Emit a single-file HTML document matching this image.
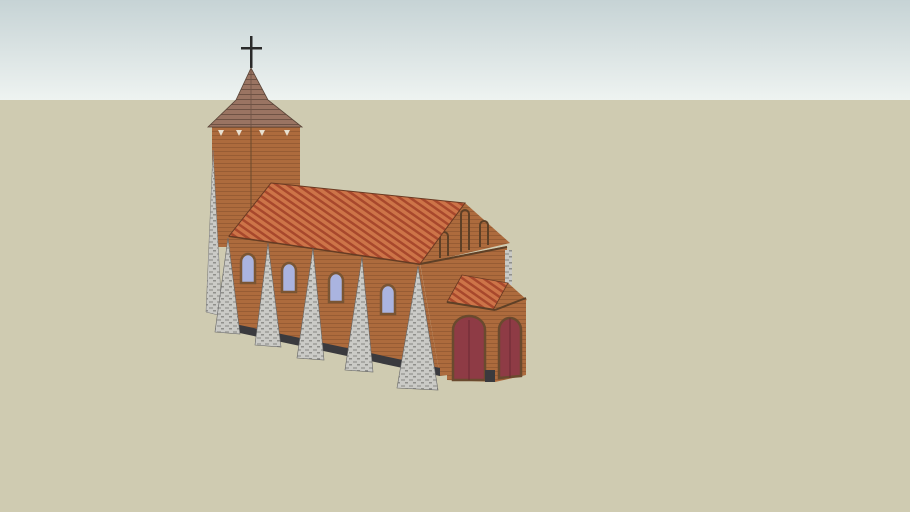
<!DOCTYPE html>
<html><head><meta charset="utf-8"><style>
html,body{margin:0;padding:0;width:910px;height:512px;overflow:hidden;background:#cfcbb1}
svg{display:block}
</style></head><body>
<svg width="910" height="512" viewBox="0 0 910 512" xmlns="http://www.w3.org/2000/svg">
<defs>
<linearGradient id="sky" x1="0" y1="0" x2="0" y2="1">
<stop offset="0" stop-color="#c6d3d5"/><stop offset="1" stop-color="#eef3f1"/></linearGradient>
<pattern id="roof" width="6" height="6" patternUnits="userSpaceOnUse" patternTransform="rotate(-55)">
<rect width="6" height="6" fill="#cd7448"/><rect width="2.5" height="6" fill="#a8482c"/></pattern>
<pattern id="troof" width="8" height="5" patternUnits="userSpaceOnUse">
<rect width="8" height="5" fill="#9a7462"/><rect y="4" width="8" height="1" fill="#6e5244"/></pattern>
<pattern id="brick" width="6" height="4" patternUnits="userSpaceOnUse">
<rect width="6" height="4" fill="#ad6b3d"/><rect y="3.3" width="6" height="0.7" fill="#8e5631"/></pattern>
<pattern id="stone" width="8" height="6" patternUnits="userSpaceOnUse">
<rect width="8" height="6" fill="#cacac6"/><rect x="1" y="1" width="4" height="2" fill="#a8a8a4"/><rect x="5" y="4" width="3" height="1.5" fill="#8f8f8b"/></pattern>
</defs>
<rect x="0" y="0" width="910" height="100" fill="url(#sky)"/>
<rect x="0" y="100" width="910" height="412" fill="#cfcbb1"/>
<rect x="250" y="36" width="2.5" height="32" fill="#2a2a2a"/>
<rect x="241" y="47" width="21" height="2.5" fill="#2a2a2a"/>
<rect x="212" y="127" width="40" height="120" fill="url(#brick)"/>
<rect x="252" y="127" width="48" height="80" fill="url(#brick)"/>
<line x1="251" y1="127" x2="251" y2="230" stroke="#6b4a2c" stroke-width="1"/>
<polygon points="251,68 236,100 208,127 302,127 268,100" fill="url(#troof)" stroke="#5a4538" stroke-width="0.8"/>
<line x1="251" y1="68" x2="251" y2="127" stroke="#6d5244" stroke-width="0.8"/>
<g fill="#e8e0d0"><polygon points="218,130 224,130 221,136"/><polygon points="236,130 242,130 239,136"/><polygon points="259,130 265,130 262,136"/><polygon points="284,130 290,130 287,136"/></g>
<polygon points="213,150 206,312 222,316" fill="url(#stone)" stroke="#777" stroke-width="0.5"/>
<polygon points="420,263 507,246 507,368 440,376" fill="url(#brick)"/>
<polygon points="465,203 510,243 420,264" fill="url(#brick)"/>
<g stroke="#5e4026" stroke-width="2" fill="none">
<path d="M440,258 v-22 a4,4 0 0 1 8,0 v20"/>
<path d="M461,252 v-38 a4,4 0 0 1 8,0 v36"/>
<path d="M480,247 v-22 a4,4 0 0 1 8,0 v20"/>
<line x1="420" y1="264" x2="507" y2="247"/>
</g>
<polygon points="505,250 512,250 512,285 505,285" fill="url(#stone)"/>
<polygon points="229,236 420,264 440,376 235,330" fill="url(#brick)"/>
<polygon points="235,324 440,368 440,376 235,332" fill="#3a3a3e"/>
<line x1="229" y1="236" x2="420" y2="264" stroke="#5e4026" stroke-width="2"/>
<g stroke="#7a5533" stroke-width="2.5" fill="#aab4e0">
<path d="M241,283 v-21 a7,8 0 0 1 14,0 v21 z"/>
<path d="M282,292 v-21 a7,8 0 0 1 14,0 v21 z"/>
<path d="M329,302 v-21 a7,8 0 0 1 14,0 v21 z"/>
<path d="M381,314 v-21 a7,8 0 0 1 14,0 v21 z"/>
</g>
<polygon points="271,183 465,203 420,264 229,236" fill="url(#roof)" stroke="#6a3a22" stroke-width="1"/>
<g fill="url(#stone)" stroke="#666" stroke-width="0.6">
<polygon points="228,238 215,332 240,334"/>
<polygon points="268,243 255,345 281,347"/>
<polygon points="313,248 297,358 324,360"/>
<polygon points="362,257 345,370 373,372"/>
<polygon points="418,266 397,388 438,390"/>
</g>
<polygon points="447,302 495,310 495,382 447,380" fill="url(#brick)"/>
<polygon points="495,310 526,298 526,375 495,382" fill="url(#brick)"/>
<polygon points="508,283 527,300 495,310" fill="url(#brick)"/>
<polygon points="462,275 508,283 493,310 447,302" fill="url(#roof)" stroke="#6a3a22" stroke-width="0.8"/>
<line x1="447" y1="302" x2="495" y2="310" stroke="#5e4026" stroke-width="2"/>
<line x1="495" y1="310" x2="526" y2="298" stroke="#5e4026" stroke-width="2"/>
<path d="M453,380 v-50 a16,14 0 0 1 32,0 v50 z" fill="#8e3b45" stroke="#6a4a2e" stroke-width="2.5"/>
<line x1="469" y1="320" x2="469" y2="380" stroke="#6a2a32"/>
<path d="M499,378 v-48 a11,12 0 0 1 22,0 v46 z" fill="#8e3b45" stroke="#6a4a2e" stroke-width="2.5"/>
<line x1="510" y1="318" x2="510" y2="378" stroke="#6a2a32"/>
<rect x="485" y="370" width="10" height="12" fill="#3a3a3e"/>
</svg>
</body></html>
